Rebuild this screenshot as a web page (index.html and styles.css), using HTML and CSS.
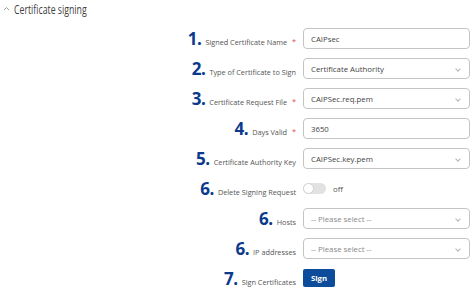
FILE: index.html
```html
<!DOCTYPE html>
<html lang="en">
<head>
  <meta charset="UTF-8">
  <title>Certificate signing</title>
  <link rel="stylesheet" href="styles.css">
</head>
<body>
  <div class="section-header">
    <svg class="chevron" width="7" height="5" viewBox="0 0 7 5"><path d="M1 4 L3.5 1.5 L6 4" fill="none" stroke="#9a9a9a" stroke-width="1"/></svg>
    <span class="section-title">Certificate signing</span>
  </div>

  <div class="form">
    <div class="label"><span class="step">1.</span>Signed Certificate Name <span class="req">*</span></div>
    <div class="field input">CAIPsec</div>

    <div class="label"><span class="step">2.</span>Type of Certificate to Sign</div>
    <div class="field select">Certificate Authority</div>

    <div class="label"><span class="step">3.</span>Certificate Request File <span class="req">*</span></div>
    <div class="field select">CAIPSec.req.pem</div>

    <div class="label"><span class="step">4.</span>Days Valid <span class="req">*</span></div>
    <div class="field input">3650</div>

    <div class="label"><span class="step">5.</span>Certificate Authority Key</div>
    <div class="field select">CAIPSec.key.pem</div>

    <div class="label"><span class="step">6.</span>Delete Signing Request</div>
    <div class="toggle-row"><span class="toggle"><span class="knob"></span></span><span class="toggle-text">off</span></div>

    <div class="label"><span class="step">6.</span>Hosts</div>
    <div class="field select placeholder">-- Please select --</div>

    <div class="label"><span class="step">6.</span>IP addresses</div>
    <div class="field select placeholder">-- Please select --</div>

    <div class="label"><span class="step">7.</span>Sign Certificates</div>
    <div class="button-row"><button class="sign-button">Sign</button></div>
  </div>
</body>
</html>
```

FILE: styles.css
```css
body {
  margin: 0;
  background: #ffffff;
  font-family: 'Open Sans', 'DejaVu Sans', sans-serif;
  color: #555;
}

.section-header {
  display: flex;
  align-items: center;
  height: 18px;
  padding-left: 3px;
}
.chevron {
  margin-right: 4px;
  margin-top: -1px;
}
.section-title {
  font-size: 12.5px;
  color: #404040;
  display: inline-block;
  transform: scaleX(0.7);
  transform-origin: left center;
  white-space: nowrap;
}

.form {
  display: grid;
  grid-template-columns: 296px 167px;
  grid-auto-rows: 21px;
  column-gap: 7px;
  row-gap: 9px;
  margin-top: 10px;
}

.label {
  display: flex;
  justify-content: flex-end;
  align-items: baseline;
  font-size: 7.3px;
  color: #555;
  line-height: 21px;
  white-space: pre;
}
.step {
  font-size: 17px;
  font-weight: 700;
  color: #0b3a8c;
  margin-right: 4px;
  letter-spacing: -0.5px;
}
.req {
  color: #e04848;
  margin-left: 3px;
}

.field {
  box-sizing: border-box;
  border: 1px solid #c4c4c4;
  border-radius: 4px;
  font-size: 7.8px;
  color: #444;
  display: flex;
  align-items: center;
  padding-left: 7px;
  position: relative;
}
.select::after {
  content: '';
  position: absolute;
  right: 9px;
  top: 8px;
  width: 3px;
  height: 3px;
  border-right: 1px solid #b5b5b5;
  border-bottom: 1px solid #b5b5b5;
  transform: rotate(45deg);
}
.placeholder {
  color: #888;
}

.toggle-row {
  display: flex;
  align-items: center;
}
.toggle {
  width: 23px;
  height: 11px;
  border-radius: 6px;
  background: #e2e2e2;
  position: relative;
}
.knob {
  position: absolute;
  left: 0;
  top: 0;
  width: 11px;
  height: 11px;
  box-sizing: border-box;
  border-radius: 50%;
  background: #fff;
  border: 1px solid #d2d2d2;
}
.toggle-text {
  font-size: 7.8px;
  color: #555;
  margin-left: 7px;
}

.button-row {
  display: flex;
  align-items: stretch;
  padding-top: 1px;
}
.sign-button {
  width: 32px;
  height: 18px;
  border: none;
  border-radius: 2px;
  background: #0c4c9b;
  color: #fff;
  font-family: 'Open Sans', sans-serif;
  font-weight: 700;
  font-size: 7.8px;
  padding: 0;
}
```
